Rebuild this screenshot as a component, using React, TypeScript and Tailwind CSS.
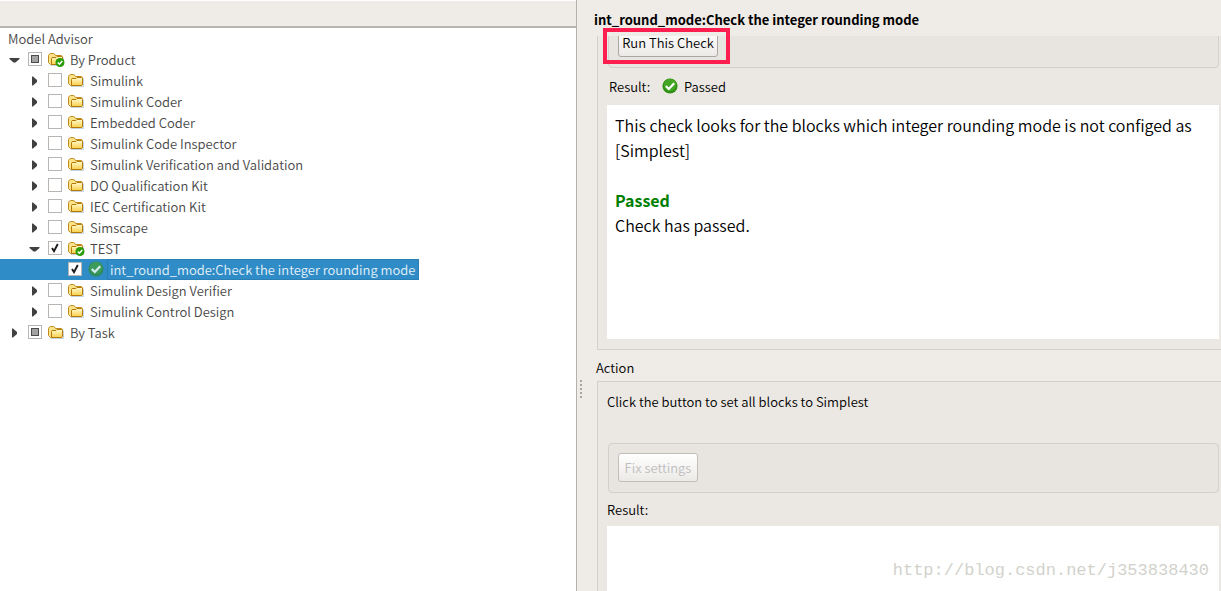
import { useId, useState } from 'react';

type CheckState = 'none' | 'checked' | 'partial';

interface TreeNode {
  label: string;
  level: 0 | 1 | 2;
  state: CheckState;
  icon: 'folder' | 'folder-passed' | 'passed';
  expanded?: boolean;
  selected?: boolean;
}

const nodes: TreeNode[] = [
  { label: 'By Product', level: 0, state: 'partial', icon: 'folder-passed', expanded: true },
  { label: 'Simulink', level: 1, state: 'none', icon: 'folder' },
  { label: 'Simulink Coder', level: 1, state: 'none', icon: 'folder' },
  { label: 'Embedded Coder', level: 1, state: 'none', icon: 'folder' },
  { label: 'Simulink Code Inspector', level: 1, state: 'none', icon: 'folder' },
  { label: 'Simulink Verification and Validation', level: 1, state: 'none', icon: 'folder' },
  { label: 'DO Qualification Kit', level: 1, state: 'none', icon: 'folder' },
  { label: 'IEC Certification Kit', level: 1, state: 'none', icon: 'folder' },
  { label: 'Simscape', level: 1, state: 'none', icon: 'folder' },
  { label: 'TEST', level: 1, state: 'checked', icon: 'folder-passed', expanded: true },
  {
    label: 'int_round_mode:Check the integer rounding mode',
    level: 2,
    state: 'checked',
    icon: 'passed',
    selected: true,
  },
  { label: 'Simulink Design Verifier', level: 1, state: 'none', icon: 'folder' },
  { label: 'Simulink Control Design', level: 1, state: 'none', icon: 'folder' },
  { label: 'By Task', level: 0, state: 'partial', icon: 'folder' },
];

const indent = { 0: 'pl-2', 1: 'pl-7', 2: 'pl-12' };

function FolderIcon({ passed = false }: { passed?: boolean }) {
  return (
    <svg width="17" height="16" viewBox="0 0 17 16" className="shrink-0">
      <defs>
        <linearGradient id="folder-front" x1="0" y1="0" x2="0" y2="1">
          <stop offset="0" stopColor="#fffbd0" />
          <stop offset="1" stopColor="#f9cf4a" />
        </linearGradient>
      </defs>
      <path d="M3 13.500h12.500v-8" fill="none" stroke="#c3d3e2" />
      <path
        d="M.5 10.500V3.500l1-1.500 1-.5h3l1.500 1 .5 1h6l1 1v7.500l-1 .5H2.500z"
        fill="#fbe38a"
        stroke="#c08a1c"
      />
      <path d="M3.500 12.500v-6l.5-1h4l1-1h4.500l1 1v6l-1 1z" fill="url(#folder-front)" stroke="#b57908" />
      {passed && (
        <>
          <circle cx="12" cy="10.500" r="4.500" fill="#2b9d06" />
          <path d="M9.800 10.500l1.600 1.700 2.900-3.200" fill="none" stroke="#fff" strokeWidth="1.500" />
        </>
      )}
    </svg>
  );
}

function PassedIcon({ muted = false }: { muted?: boolean }) {
  return (
    <svg width="16" height="16" viewBox="0 0 16 16" className="mb-0.5 shrink-0">
      <circle cx="8" cy="8" r="7.600" fill={muted ? '#2f8a5c' : '#2f8f14'} />
      <circle cx="8" cy="7" r="6.200" fill={muted ? '#3d9c5c' : '#43a524'} />
      <path
        d="M3.800 8l3 3 5.400-5.800"
        fill="none"
        stroke={muted ? '#d5ecf2' : '#fff'}
        strokeWidth="2.200"
      />
    </svg>
  );
}

function Arrow({ expanded }: { expanded?: boolean }) {
  return (
    <svg width="12" height="12" viewBox="0 0 12 12">
      <path d={expanded ? 'M1.500 4h10v1L7.500 8.500h-2L1.500 5z' : 'M4 1.500h1L9 5v2l-4 3.500H4z'} fill="#414141" />
    </svg>
  );
}

function TreeRow({ node }: { node: TreeNode }) {
  const id = useId();
  const [state, setState] = useState(node.state);

  return (
    <li className="flex h-[21px] items-stretch">
      <div
        className={`flex items-center ${indent[node.level]} ${node.selected ? 'bg-[#308cc6] text-[#e3f1fa]' : ''}`}
      >
        {node.level === 2 ? (
          <span className="w-5" />
        ) : (
          <button type="button" aria-label={`Toggle ${node.label}`} className="w-5">
            <Arrow expanded={node.expanded} />
          </button>
        )}
        <span className="mr-1.5 mb-0.5 grid size-3.5 shrink-0 place-items-center">
          <input
            id={id}
            type="checkbox"
            checked={state === 'checked'}
            onChange={() => setState(state === 'checked' ? 'none' : 'checked')}
            className="col-start-1 row-start-1 size-3.5 appearance-none border border-[#b8b5b2] bg-white"
          />
          {state === 'checked' && (
            <svg width="10" height="10" viewBox="0 0 10 10" className="pointer-events-none col-start-1 row-start-1">
              <path d="M2 5l2 3.200L7.800 1" fill="none" stroke="#1c1c1c" strokeWidth="1.900" />
            </svg>
          )}
          {state === 'partial' && (
            <span className="pointer-events-none col-start-1 row-start-1 size-2 border border-[#4c4c4c] bg-[#a3a3a3]" />
          )}
        </span>
        {node.icon === 'passed' ? <PassedIcon muted /> : <FolderIcon passed={node.icon === 'folder-passed'} />}
        <label
          htmlFor={id}
          className={
            node.selected
              ? 'ml-[3px] border border-[#2a7fb5] px-0.5 leading-[19px]'
              : 'ml-[5px] leading-[21px]'
          }
        >
          {node.label}
        </label>
      </div>
    </li>
  );
}

function ButtonPanel({ children }: { children: React.ReactNode }) {
  return (
    <div className="ml-px h-[50px] rounded-sm border border-[#d3d0cb] bg-[#e8e5e0] px-[9px] pt-[9px]">
      {children}
    </div>
  );
}

const buttonStyle =
  'block h-[29px] rounded-[3px] border bg-linear-to-b from-white to-[#eceae7] text-[13px] whitespace-nowrap';

export default function App() {
  return (
    <div className="grid min-h-screen grid-cols-[577fr_644fr] overflow-hidden bg-[#efebe7] font-['Noto_Sans_CJK_SC',sans-serif] text-[13px] font-[350] text-black">
      <aside className="border-r border-[#b5b1ad] bg-white text-[#484848]">
        <div className="h-7 border-t border-b-2 border-t-white border-b-[#b8b4b0] bg-[#efebe7]" />
        <h2 className="pl-2 leading-[21px]">Model Advisor</h2>
        <ul>
          {nodes.map((node) => (
            <TreeRow key={node.label} node={node} />
          ))}
        </ul>
      </aside>

      <div className="flex min-w-0">
        <div className="w-[17px] shrink-0 space-y-0.5 pt-[380px] pl-[3px]">
          {[0, 1, 2, 3, 4].map((dot) => (
            <div key={dot} className="h-0.5 w-0.5 bg-[#a9a5a1]" />
          ))}
        </div>

        <main className="relative flex min-w-0 flex-1 flex-col">
          <h1 className="h-9 leading-10 font-bold whitespace-nowrap">
            int_round_mode:Check the integer rounding mode
          </h1>

          <div className="flex flex-1 flex-col overflow-hidden pl-[3px]">
            {/* scrolled so the top of the group is out of view */}
            <section className="-mt-[29px] border border-r-0 border-[#d3d0cb] bg-[#ebe8e3] py-2.5 pr-0.5 pl-[9px]">
              <ButtonPanel>
                <button type="button" className={`${buttonStyle} w-[100px] border-[#aaa7a3]`}>
                  Run This Check
                </button>
              </ButtonPanel>
              <div className="flex h-[37px] items-center pl-0.5">
                <span className="w-[53px]">Result:</span>
                <PassedIcon />
                <span className="ml-1.5">Passed</span>
              </div>
              <div className="h-[234px] bg-white p-2 text-base leading-[25px]">
                <p>This check looks for the blocks which integer rounding mode is not configed as [Simplest]</p>
                <p className="mt-[25px] font-bold text-[#008000]">Passed</p>
                <p>Check has passed.</p>
              </div>
            </section>

            <h2 className="-ml-px h-[31px] leading-9">Action</h2>

            <section className="flex flex-1 flex-col border-t border-l border-[#d3d0cb] bg-[#ebe8e3] pr-0.5 pl-[9px]">
              <p className="h-[61px] leading-10">Click the button to set all blocks to Simplest</p>
              <ButtonPanel>
                <button type="button" disabled className={`${buttonStyle} w-20 border-[#c1beba] text-[#bebebe]`}>
                  Fix settings
                </button>
              </ButtonPanel>
              <p className="leading-[33px]">Result:</p>
              <div className="flex min-h-[65px] flex-1 items-end justify-end bg-white pr-2.5 pb-2 font-['Liberation_Mono',monospace] text-[17px] leading-6 text-[#d2d2cc]">
                http://blog.csdn.net/j353838430
              </div>
            </section>
          </div>

          {/* highlight around the run button */}
          <div className="pointer-events-none absolute top-7 left-[9px] h-9 w-[127px] border-4 border-[#fb1e4e]" />
        </main>
      </div>
    </div>
  );
}
